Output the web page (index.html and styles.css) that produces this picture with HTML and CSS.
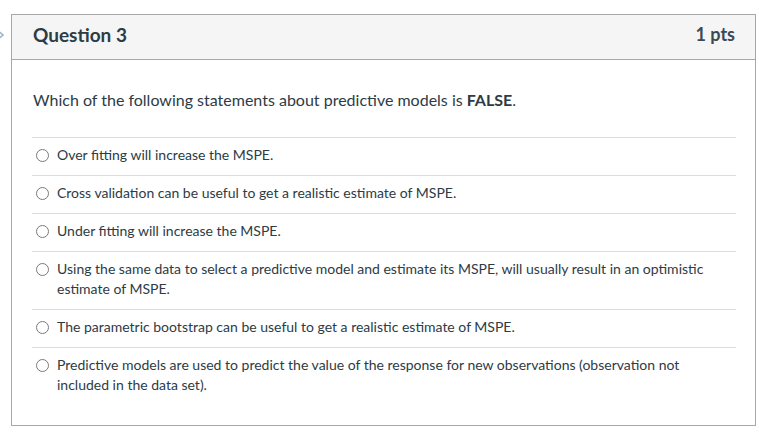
FILE: index.html
```html
<!DOCTYPE html>
<html>
<head>
<meta charset="utf-8">
<link rel="stylesheet" href="styles.css">
</head>
<body>
<div class="page">
  <svg class="chev" width="8" height="10" viewBox="0 0 8 10"><path d="M-2 1 L3 5 L-2 9" fill="none" stroke="#9fb3c8" stroke-width="1.6"/></svg>
  <div class="question">
    <div class="qhead">
      <span class="qtitle">Question 3</span>
      <span class="qpts">1 pts</span>
    </div>
    <div class="qbody">
      <p class="qtext">Which of the following statements about predictive models is <strong>FALSE</strong>.</p>
      <div class="answers">
        <div class="answer"><span class="radio"></span><span class="atext">Over fitting will increase the MSPE.</span></div>
        <div class="answer"><span class="radio"></span><span class="atext">Cross validation can be useful to get a realistic estimate of MSPE.</span></div>
        <div class="answer"><span class="radio"></span><span class="atext">Under fitting will increase the MSPE.</span></div>
        <div class="answer"><span class="radio"></span><span class="atext">Using the same data to select a predictive model and estimate its MSPE, will usually result in an optimistic estimate of MSPE.</span></div>
        <div class="answer"><span class="radio"></span><span class="atext">The parametric bootstrap can be useful to get a realistic estimate of MSPE.</span></div>
        <div class="answer"><span class="radio"></span><span class="atext">Predictive models are used to predict the value of the response for new observations (observation not included in the data set).</span></div>
      </div>
    </div>
  </div>
</div>
</body>
</html>
```

FILE: styles.css
```css
html, body {
  margin: 0;
  padding: 0;
  background: #ffffff;
}
body {
  font-family: Lato, "Noto Sans", sans-serif;
  color: #2d3b45;
}
.page {
  position: relative;
  padding: 14px 3px 0 11px;
}
.chev {
  position: absolute;
  left: 0;
  top: 30px;
}
.question {
  border: 1px solid #a8a8a8;
  width: 743px;
}
.qhead {
  display: flex;
  justify-content: space-between;
  align-items: center;
  height: 38px;
  padding: 0 20px 6px 21px;
  background: #f5f5f5;
  border-bottom: 1px solid #a8a8a8;
}
.qtitle {
  font-size: 19px;
  font-weight: 700;
}
.qpts {
  font-size: 18px;
  font-weight: 700;
  color: #3b4a55;
}
.qbody {
  padding: 0 19px 20px 20px;
}
.qtext {
  margin: 0;
  padding: 32px 0 29px 1px;
  font-size: 16px;
  line-height: 16px;
}
.qtext strong {
  font-weight: 700;
}
.answers {
  display: flex;
  flex-direction: column;
}
.answer {
  display: flex;
  align-items: flex-start;
  border-top: 1px solid #dcdcdc;
  padding: 7px 0 10px 4px;
  font-size: 14px;
  line-height: 20px;
}
.radio {
  flex: none;
  width: 11px;
  height: 11px;
  border: 1px solid #7a7a7a;
  border-radius: 50%;
  margin: 4px 8px 0 0;
  background: #fff;
}
.atext {
  flex: 1;
  padding-right: 20px;
}
```
